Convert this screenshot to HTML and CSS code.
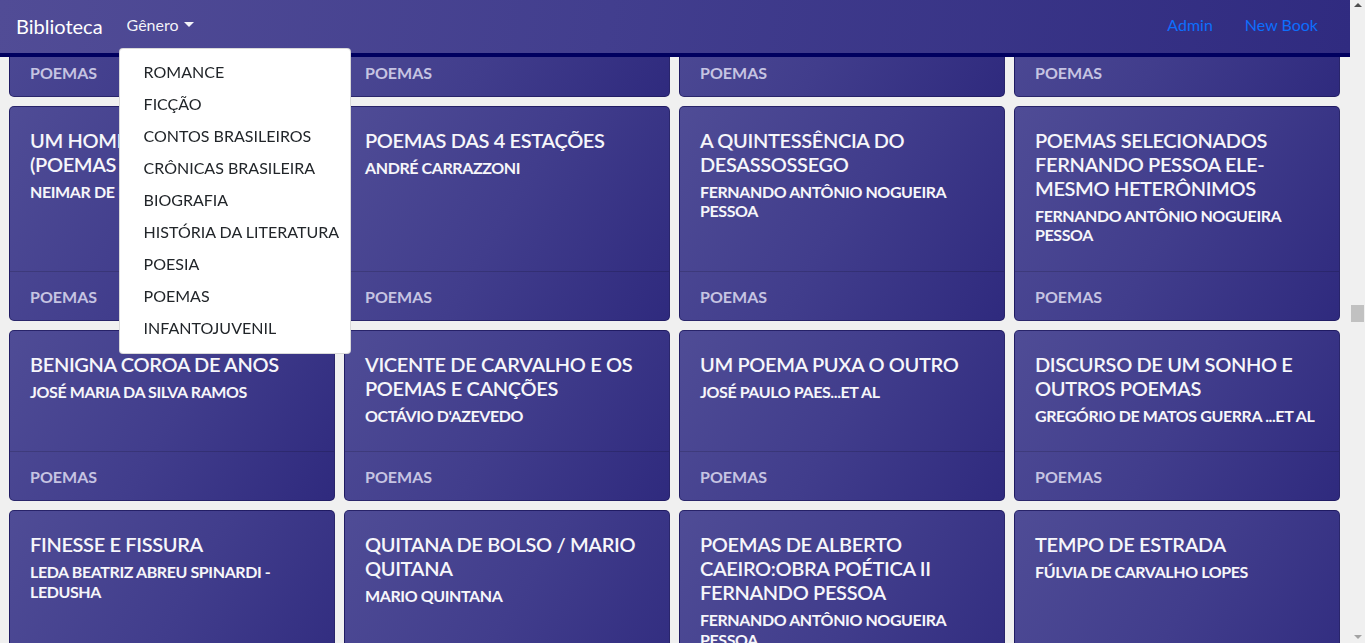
FILE: index.html
```html
<!DOCTYPE html>
<html lang="pt-BR">
<head>
<meta charset="utf-8">
<title>Biblioteca</title>
<link rel="stylesheet" href="styles.css">
</head>
<body>
<div class="viewport" id="viewport">
  <nav class="navbar">
    <a class="brand" href="#">Biblioteca</a>
    <div class="dropdown">
      <a class="nav-link dropdown-toggle" href="#">Gênero</a>
      <ul class="dropdown-menu">
        <li><a class="dropdown-item" href="#">ROMANCE</a></li>
        <li><a class="dropdown-item" href="#">FICÇÃO</a></li>
        <li><a class="dropdown-item" href="#">CONTOS BRASILEIROS</a></li>
        <li><a class="dropdown-item" href="#">CRÔNICAS BRASILEIRA</a></li>
        <li><a class="dropdown-item" href="#">BIOGRAFIA</a></li>
        <li><a class="dropdown-item" href="#">HISTÓRIA DA LITERATURA</a></li>
        <li><a class="dropdown-item" href="#">POESIA</a></li>
        <li><a class="dropdown-item" href="#">POEMAS</a></li>
        <li><a class="dropdown-item" href="#">INFANTOJUVENIL</a></li>
      </ul>
    </div>
    <div class="nav-right">
      <a class="nav-link link-blue" href="#">Admin</a>
      <a class="nav-link link-blue" href="#">New Book</a>
    </div>
  </nav>

  <main class="book-grid">
    <article class="card"><div class="card-body"><h5 class="card-title">ANTOLOGIA POÉTICA</h5><h6 class="card-subtitle">CARLOS DRUMMOND DE ANDRADE</h6></div><div class="card-footer">POEMAS</div></article>
    <article class="card"><div class="card-body"><h5 class="card-title">MENSAGEM</h5><h6 class="card-subtitle">FERNANDO PESSOA</h6></div><div class="card-footer">POEMAS</div></article>
    <article class="card"><div class="card-body"><h5 class="card-title">LIRA DOS VINTE ANOS</h5><h6 class="card-subtitle">ÁLVARES DE AZEVEDO</h6></div><div class="card-footer">POEMAS</div></article>
    <article class="card"><div class="card-body"><h5 class="card-title">ESPUMAS FLUTUANTES</h5><h6 class="card-subtitle">CASTRO ALVES</h6></div><div class="card-footer">POEMAS</div></article>

    <article class="card row-2"><div class="card-body"><h5 class="card-title">UM HOMEM QUALQUER (POEMAS ESCOLHIDOS)</h5><h6 class="card-subtitle">NEIMAR DE BARROS</h6></div><div class="card-footer">POEMAS</div></article>
    <article class="card"><div class="card-body"><h5 class="card-title">POEMAS DAS 4 ESTAÇÕES</h5><h6 class="card-subtitle">ANDRÉ CARRAZZONI</h6></div><div class="card-footer">POEMAS</div></article>
    <article class="card"><div class="card-body"><h5 class="card-title">A QUINTESSÊNCIA DO DESASSOSSEGO</h5><h6 class="card-subtitle">FERNANDO ANTÔNIO NOGUEIRA PESSOA</h6></div><div class="card-footer">POEMAS</div></article>
    <article class="card"><div class="card-body"><h5 class="card-title">POEMAS SELECIONADOS FERNANDO PESSOA ELE-MESMO HETERÔNIMOS</h5><h6 class="card-subtitle">FERNANDO ANTÔNIO NOGUEIRA PESSOA</h6></div><div class="card-footer">POEMAS</div></article>

    <article class="card"><div class="card-body"><h5 class="card-title">BENIGNA COROA DE ANOS</h5><h6 class="card-subtitle">JOSÉ MARIA DA SILVA RAMOS</h6></div><div class="card-footer">POEMAS</div></article>
    <article class="card"><div class="card-body"><h5 class="card-title">VICENTE DE CARVALHO E OS POEMAS E CANÇÕES</h5><h6 class="card-subtitle">OCTÁVIO D'AZEVEDO</h6></div><div class="card-footer">POEMAS</div></article>
    <article class="card"><div class="card-body"><h5 class="card-title">UM POEMA PUXA O OUTRO</h5><h6 class="card-subtitle">JOSÉ PAULO PAES...ET AL</h6></div><div class="card-footer">POEMAS</div></article>
    <article class="card"><div class="card-body"><h5 class="card-title">DISCURSO DE UM SONHO E OUTROS POEMAS</h5><h6 class="card-subtitle">GREGÓRIO DE MATOS GUERRA ...ET AL</h6></div><div class="card-footer">POEMAS</div></article>

    <article class="card"><div class="card-body"><h5 class="card-title">FINESSE E FISSURA</h5><h6 class="card-subtitle">LEDA BEATRIZ ABREU SPINARDI - LEDUSHA</h6></div><div class="card-footer">POEMAS</div></article>
    <article class="card"><div class="card-body"><h5 class="card-title">QUITANA DE BOLSO / MARIO QUITANA</h5><h6 class="card-subtitle">MARIO QUINTANA</h6></div><div class="card-footer">POEMAS</div></article>
    <article class="card"><div class="card-body"><h5 class="card-title">POEMAS DE ALBERTO CAEIRO:OBRA POÉTICA II FERNANDO PESSOA</h5><h6 class="card-subtitle">FERNANDO ANTÔNIO NOGUEIRA PESSOA</h6></div><div class="card-footer">POEMAS</div></article>
    <article class="card"><div class="card-body"><h5 class="card-title">TEMPO DE ESTRADA</h5><h6 class="card-subtitle">FÚLVIA DE CARVALHO LOPES</h6></div><div class="card-footer">POEMAS</div></article>

    <article class="card"><div class="card-body"><h5 class="card-title">SONETOS</h5><h6 class="card-subtitle">LUÍS VAZ DE CAMÕES</h6></div><div class="card-footer">POEMAS</div></article>
    <article class="card"><div class="card-body"><h5 class="card-title">O GUARDADOR DE REBANHOS</h5><h6 class="card-subtitle">ALBERTO CAEIRO</h6></div><div class="card-footer">POEMAS</div></article>
    <article class="card"><div class="card-body"><h5 class="card-title">POEMAS ESCOLHIDOS</h5><h6 class="card-subtitle">CECÍLIA MEIRELES</h6></div><div class="card-footer">POEMAS</div></article>
    <article class="card"><div class="card-body"><h5 class="card-title">ESTRELA DA VIDA INTEIRA</h5><h6 class="card-subtitle">MANUEL BANDEIRA</h6></div><div class="card-footer">POEMAS</div></article>
  </main>
</div>

<aside class="scrollbar" aria-hidden="true">
  <span class="sb-arrow sb-up"></span>
  <span class="sb-thumb"></span>
  <span class="sb-arrow sb-down"></span>
</aside>
<script src="app.js"></script>
</body>
</html>
```

FILE: styles.css
```css
* { box-sizing: border-box; }

html, body {
  margin: 0;
  padding: 0;
  height: 100%;
}

body {
  display: flex;
  overflow: hidden;
  background: #f0f0f0;
  font-family: "Lato", "Noto Sans", "DejaVu Sans", sans-serif;
  font-size: 16px;
  line-height: 1.5;
  color: #212529;
}

a { text-decoration: none; }

.viewport {
  flex: 1;
  height: 100%;
  overflow-y: auto;
  scrollbar-width: none;
}

.viewport::-webkit-scrollbar { display: none; }

/* Navbar */
.navbar {
  position: sticky;
  top: 0;
  z-index: 10;
  height: 57px;
  display: flex;
  align-items: center;
  padding: 0 16px 4px;
  background: linear-gradient(100deg, #514c96 0%, #423e8e 45%, #302b80 100%);
  border-bottom: 4px solid #00005f;
}

.brand {
  color: #ffffff;
  font-size: 20px;
  line-height: 30px;
  margin-right: 16px;
  padding-top: 2px;
}

.dropdown {
  position: relative;
}

.nav-link {
  display: block;
  padding: 8px;
  line-height: 24px;
  font-size: 16px;
}

.dropdown-toggle {
  color: rgba(255, 255, 255, 0.94);
}

.dropdown-toggle::after {
  content: "";
  display: inline-block;
  margin-left: 5px;
  vertical-align: 4px;
  border-top: 5px solid;
  border-right: 5px solid transparent;
  border-left: 5px solid transparent;
}

.dropdown-menu {
  position: absolute;
  top: calc(100% + 3px);
  left: 0;
  width: 232px;
  margin: 0;
  padding: 8px 0;
  list-style: none;
  background: #ffffff;
  border: 1px solid rgba(0, 0, 0, 0.15);
  border-radius: 4px;
  z-index: 20;
}

.dropdown-item {
  display: block;
  padding: 3px 24px 5px;
  color: #212529;
  white-space: nowrap;
  line-height: 24px;
}

.nav-right {
  margin-left: auto;
  display: flex;
}

.link-blue {
  color: #0d6efd;
  padding: 8px 16px;
}

/* Grid of books */
.book-grid {
  display: grid;
  grid-template-columns: repeat(4, 1fr);
  gap: 9px;
  padding: 9px 10px 400px 9px;
}

.card {
  display: flex;
  flex-direction: column;
  border: 1px solid rgba(20, 15, 80, 0.6);
  border-radius: 5px;
  background: linear-gradient(120deg, #4f4c96 0%, #413d8c 50%, #2f2a7e 100%);
  color: #f6f6fa;
  overflow: hidden;
}

.card-body {
  flex: 1;
  padding: 21px 20px 19px;
}

.card-title {
  margin: 0 0 12px;
  font-size: 20px;
  line-height: 24px;
  font-weight: 600;
  letter-spacing: -0.35px;
}

.card-subtitle {
  margin: -6px 0 7px;
  font-size: 16px;
  line-height: 19.5px;
  font-weight: 700;
  letter-spacing: -0.4px;
}

.card-footer {
  padding: 13px 20px 11px;
  border-top: 1px solid rgba(0, 0, 0, 0.15);
  font-weight: 700;
  line-height: 24px;
  color: #c6c4e2;
}

/* Window scrollbar */
.scrollbar {
  flex: 0 0 15px;
  height: 100%;
  display: flex;
  flex-direction: column;
  align-items: center;
  background: #f0f0f0;
}

.sb-arrow {
  width: 0;
  height: 0;
  border-left: 4px solid transparent;
  border-right: 4px solid transparent;
}

.sb-up {
  margin-top: 3px;
  border-bottom: 4px solid #505050;
}

.sb-down {
  margin-top: auto;
  margin-bottom: 4px;
  border-top: 4px solid #a3a3a3;
}

.sb-thumb {
  width: 13px;
  height: 17px;
  margin-top: 298px;
  background: #c1c1c1;
}
```

FILE: app.js
```js
(function () {
  var viewport = document.getElementById('viewport');
  var target = document.querySelector('.row-2');
  var offset = target.getBoundingClientRect().top - viewport.getBoundingClientRect().top;
  viewport.scrollTop = viewport.scrollTop + offset - 106;
})();
```
